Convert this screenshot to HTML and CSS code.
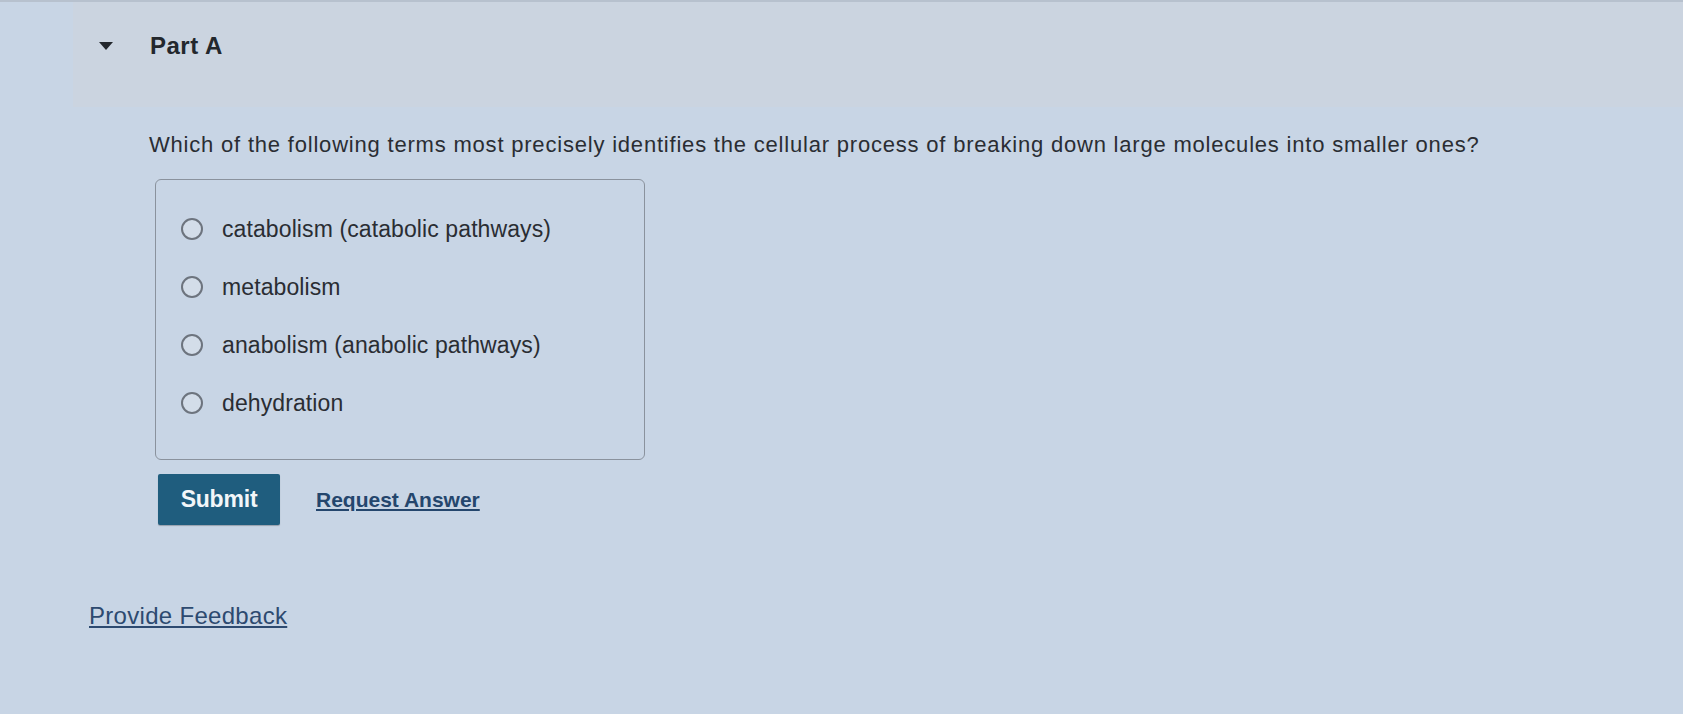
FILE: index.html
```html
<!DOCTYPE html>
<html lang="en">
<head>
<meta charset="utf-8">
<title>Part A</title>
<link rel="stylesheet" href="styles.css">
</head>
<body>
<div class="page">
  <div class="part-header">
    <svg class="toggle" width="14" height="8" viewBox="0 0 14 8"><polygon points="0,0 14,0 7,8" fill="#23272d"/></svg>
    <h2 class="part-title">Part A</h2>
  </div>
  <div class="part-body">
    <p class="question">Which of the following terms most precisely identifies the cellular process of breaking down large molecules into smaller ones?</p>
    <div class="options">
      <label class="option"><span class="radio"></span><span class="opt-text">catabolism (catabolic pathways)</span></label>
      <label class="option"><span class="radio"></span><span class="opt-text">metabolism</span></label>
      <label class="option"><span class="radio"></span><span class="opt-text">anabolism (anabolic pathways)</span></label>
      <label class="option"><span class="radio"></span><span class="opt-text">dehydration</span></label>
    </div>
    <div class="actions">
      <button class="submit">Submit</button>
      <a class="request" href="#">Request Answer</a>
    </div>
  </div>
  <a class="feedback" href="#">Provide Feedback</a>
</div>
</body>
</html>
```
FILE: styles.css
```css
html, body {
  margin: 0;
  padding: 0;
}
body {
  background: #c8d5e5;
  font-family: "Liberation Sans", Arial, Helvetica, sans-serif;
  color: #2a2d33;
  width: 1683px;
  height: 714px;
  overflow: hidden;
  border-top: 2px solid #b7c1ce;
  box-sizing: border-box;
}
.page {
  padding-left: 73px;
}
.part-header {
  background: #cbd4e0;
  height: 105px;
  display: flex;
  align-items: flex-start;
  padding-top: 30px;
  box-sizing: border-box;
}
.toggle {
  margin-left: 26px;
  margin-top: 10px;
}
.part-title {
  margin: 0 0 0 37px;
  font-size: 24px;
  line-height: 28px;
  font-weight: bold;
  color: #23272d;
  letter-spacing: 0.5px;
}
.part-body {
  padding-left: 76px;
}
.question {
  margin: 25px 0 0 0;
  font-size: 22px;
  line-height: 26px;
  letter-spacing: 0.8px;
}
.options {
  margin: 21px 0 0 6px;
  width: 490px;
  height: 281px;
  box-sizing: border-box;
  border: 1px solid #8a929d;
  border-radius: 6px;
  padding: 20px 0 0 25px;
}
.option {
  display: flex;
  align-items: center;
  height: 58px;
}
.radio {
  width: 22px;
  height: 22px;
  box-sizing: border-box;
  border: 2px solid #6d747e;
  border-radius: 50%;
  background: #d3dde9;
  flex: none;
}
.opt-text {
  margin-left: 19px;
  font-size: 23px;
  letter-spacing: 0.1px;
}
.actions {
  display: flex;
  align-items: center;
  margin: 14px 0 0 9px;
}
.submit {
  width: 122px;
  height: 51px;
  background: #1f5d7e;
  color: #f2f6f9;
  border: none;
  border-radius: 2px;
  font-family: "Liberation Sans", Arial, Helvetica, sans-serif;
  font-weight: bold;
  font-size: 23px;
  letter-spacing: -0.2px;
  padding: 0;
  box-shadow: 0 1px 1px rgba(0,0,0,0.25);
}
.request {
  margin-left: 36px;
  font-size: 21px;
  font-weight: bold;
  color: #24466d;
  text-decoration: underline;
  letter-spacing: 0px;
}
.feedback {
  display: inline-block;
  margin: 77px 0 0 16px;
  font-size: 24px;
  line-height: 28px;
  color: #2d4a70;
  text-decoration: underline;
  letter-spacing: 0.3px;
}
```
